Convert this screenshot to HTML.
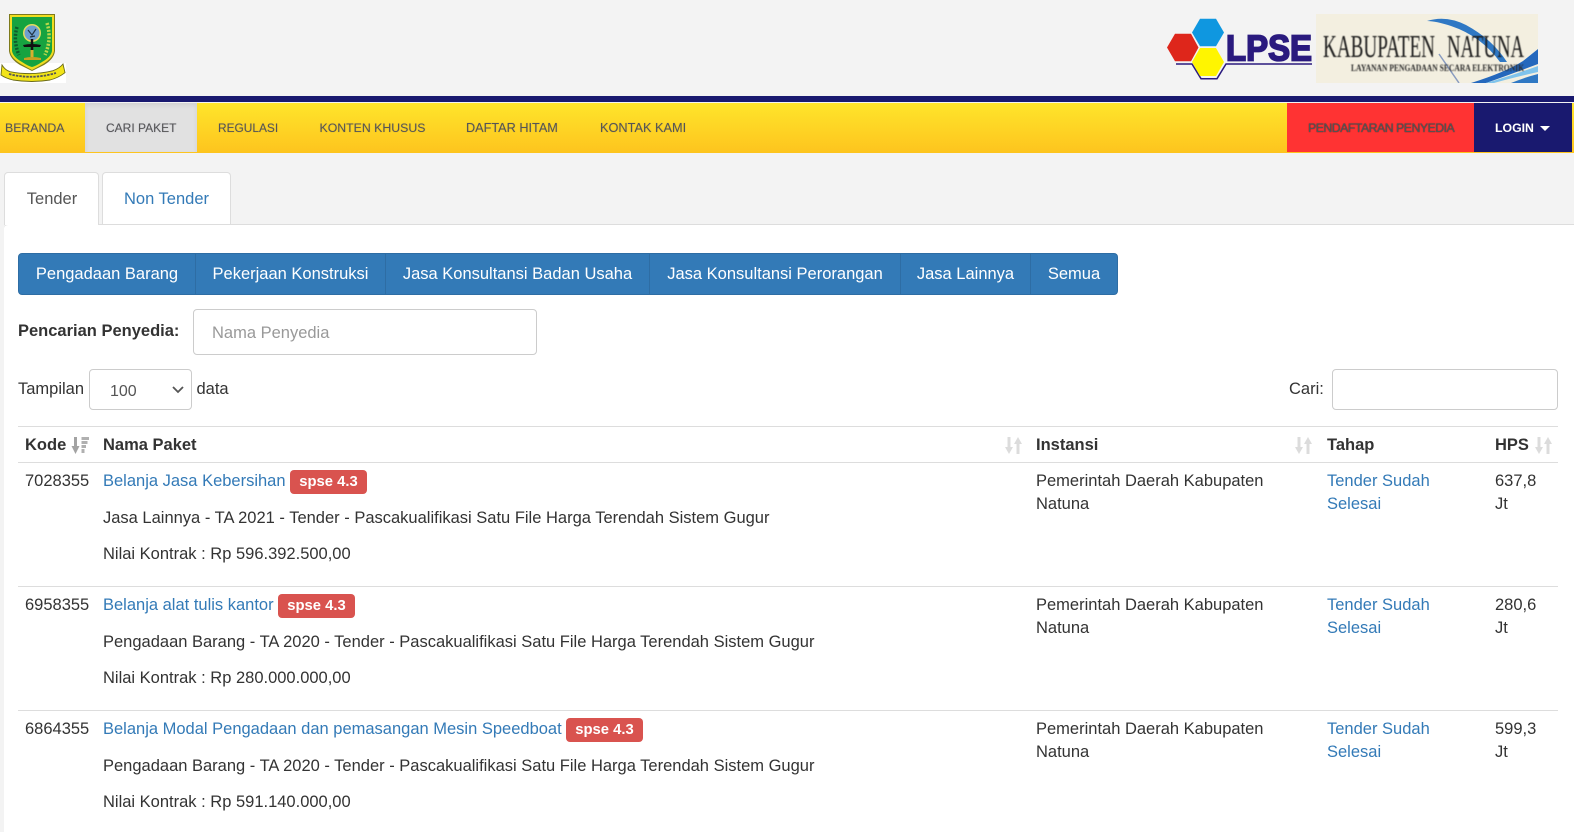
<!DOCTYPE html>
<html><head><meta charset="utf-8"><title>LPSE Kabupaten Natuna</title>
<style>
html,body{margin:0;padding:0;width:1574px;height:832px;overflow:hidden;background:#f3f3f3}
body{position:relative;font-family:"Liberation Sans",sans-serif;font-size:16.5px;color:#333}
.a{position:absolute;white-space:nowrap;line-height:23px;margin-top:1px}
a,.l{color:#337ab7;text-decoration:none}
.n{position:absolute;top:103px;height:50px;line-height:50px;font-size:12.3px;color:#555;white-space:nowrap;text-shadow:0 0 1px rgba(60,60,110,.35)}
.b{position:absolute;top:253px;height:42px;line-height:40px;color:#fff;background:#337ab7;border:1px solid #2e6da4;border-left:0;box-sizing:border-box;text-align:center;white-space:nowrap}
.bd{position:absolute;background:#ddd;height:1px;left:18px;width:1540px}
.lab{position:absolute;background:#d9534f;color:#fff;font-weight:bold;font-size:14.8px;height:24px;line-height:24px;border-radius:4px;text-align:center;white-space:nowrap}
.th{font-weight:bold}
</style></head><body>

<svg style="position:absolute;left:0;top:13px" width="67" height="71" viewBox="0 0 67 71">
<rect x="0" y="50" width="66" height="20" fill="#fff"/>
<path d="M9 1H55V38Q54 46 44 52Q36 56 32 58Q28 56 20 52Q10 46 9 38Z" fill="#7d7a1c"/>
<path d="M10 2H54V38Q53 45 43 51Q36 55 32 57Q28 55 21 51Q11 45 10 38Z" fill="#f0dd20"/>
<path d="M12 4H52V38Q51 44 42 49Q36 53 32 54Q28 53 22 49Q13 44 12 38Z" fill="#16a340"/>
<circle cx="32" cy="20" r="9" fill="#e6dc60"/>
<circle cx="32" cy="20" r="7.500" fill="#6f9fd0"/>
<path d="M28 17L32 22L36 16M30 24L35 23" stroke="#234" stroke-width="1.200" fill="none"/>
<path d="M23 32Q32 30 41 32L40 34H24Z" fill="#111"/>
<path d="M32 26V37" stroke="#111" stroke-width="2.500"/>
<path d="M32 37V44" stroke="#d8b030" stroke-width="3"/>
<path d="M24 45Q32 43 41 45V47H24Z" fill="#c8a020"/>
<path d="M17 14Q13 28 19 42" stroke="#0d5c2a" stroke-width="3.500" stroke-dasharray="2 1.500" fill="none"/>
<path d="M47 10Q52 26 45 42" stroke="#bcd84a" stroke-width="3.500" stroke-dasharray="2 1.500" fill="none"/>
<path d="M2 52Q5 57 10 58.700Q32 63 53 57.700Q60 55 63 51L65 59.700Q58 65 50 67Q32 70 13 67Q5 65 1 62Z" fill="#f2e418" stroke="#6a6a18" stroke-width=".9"/>
<path d="M9 61Q32 67 56 60" stroke="#555" stroke-width="1.800" stroke-dasharray="2.500 1" fill="none"/>
</svg>

<svg style="position:absolute;left:1165px;top:17px" width="150" height="64" viewBox="1165 17 150 64">
<path d="M1176 64H1192L1201 78.700H1217L1226 64H1312" fill="none" stroke="#2a1a7e" stroke-width="1.500"/>
<polygon points="1167,47.500 1175,33.700 1191,33.700 1198.500,47.500 1191,61.300 1175,61.300" fill="#de261b"/>
<polygon points="1192,32.500 1200,18.700 1216,18.700 1224,32.500 1216,46.300 1200,46.300" fill="#0f97e0"/>
<polygon points="1192,62 1200,48 1216,48 1224,62 1216,76 1200,76" fill="#fff500"/>
<text x="1226" y="60.300" font-family="Liberation Sans" font-weight="bold" font-size="36" fill="#2a1a7e" stroke="#2a1a7e" stroke-width="1.800" textLength="86" lengthAdjust="spacingAndGlyphs">LPSE</text>
</svg>

<svg style="position:absolute;left:1316px;top:14px" width="222" height="69" viewBox="0 0 222 69">
<defs><filter id="bl" x="-5%" y="-20%" width="110%" height="140%"><feGaussianBlur stdDeviation=".45"/></filter></defs>
<rect width="222" height="69" fill="#f3efe0"/>
<path d="M111 7Q130 1 150 11Q176 25 191 48L184 48Q165 22 135 12Q120 7 111 7Z" fill="#2f78c4"/>
<path d="M123 40L143 69" stroke="#8a9cc0" stroke-width="1.500"/>
<path d="M222 35V50Q190 62 170 69H155Q190 58 207 47Z" fill="#2468bd"/>
<path d="M222 52V58Q195 64 178 69H170Q200 60 222 52Z" fill="#7fc3ec"/>
<path d="M222 60V69H195Q210 63 222 60Z" fill="#2f78c4"/>
<g filter="url(#bl)">
<text x="7" y="43" font-family="Liberation Serif" font-size="32" fill="#1e1e1e" textLength="112" lengthAdjust="spacingAndGlyphs">KABUPATEN</text>
<text x="131" y="43" font-family="Liberation Serif" font-size="32" fill="#1e1e1e" textLength="77" lengthAdjust="spacingAndGlyphs">NATUNA</text>
<text x="35" y="57" font-family="Liberation Serif" font-weight="bold" font-size="9" fill="#2a2a2a" textLength="173" lengthAdjust="spacingAndGlyphs">LAYANAN PENGADAAN SECARA ELEKTRONIK</text>
</g>
</svg>

<div style="position:absolute;left:0;top:96px;width:1574px;height:6px;background:#19196f"></div>
<div style="position:absolute;left:0;top:103px;width:1574px;height:50px;background:linear-gradient(#ffe52b,#fdc41e)"></div>
<div style="position:absolute;left:85px;top:103px;width:112px;height:49px;background:#e1e1e1;box-shadow:inset 0 2px 5px rgba(0,0,0,.08)"></div>
<div style="position:absolute;left:1287px;top:103px;width:187px;height:49px;background:#ff3333"></div>
<div style="position:absolute;left:1474px;top:103px;width:98px;height:49px;background:#19196f"></div>

<div class="n" style="left:5px">BERANDA</div>
<div class="n" style="left:106px;font-size:12px">CARI PAKET</div>
<div class="n" style="left:218px;font-size:11.900px">REGULASI</div>
<div class="n" style="left:319.500px">KONTEN KHUSUS</div>
<div class="n" style="left:466px;font-size:12.700px">DAFTAR HITAM</div>
<div class="n" style="left:600px;font-size:12.750px">KONTAK KAMI</div>
<div class="n" style="left:1308px;letter-spacing:-.5px;text-shadow:0 0 1px #222">PENDAFTARAN PENYEDIA</div>
<div class="n" style="left:1495px;color:#fff;font-weight:bold;font-size:12.3px">LOGIN</div>
<div style="position:absolute;left:1540px;top:126px;border-left:5.500px solid transparent;border-right:5.500px solid transparent;border-top:5px solid #fff"></div>

<div style="position:absolute;left:4px;top:224px;width:1570px;height:608px;background:#fff;border-top:1px solid #ddd;border-radius:4px 0 0 0;box-sizing:border-box"></div>
<div style="position:absolute;left:4px;top:172px;width:95px;height:53px;box-sizing:border-box;background:#fff;border:1px solid #ddd;border-bottom:0;border-radius:4px 4px 0 0;text-align:center;line-height:52px;color:#555;padding-left:1px">Tender</div>
<div style="position:absolute;left:102px;top:172px;width:129px;height:52px;box-sizing:border-box;background:#fff;border:1px solid #ddd;border-bottom:0;border-radius:4px 4px 0 0;text-align:center;line-height:52px;color:#337ab7">Non Tender</div>

<div class="b" style="left:18px;width:178px;border-left:1px solid #2e6da4;border-radius:4px 0 0 4px">Pengadaan Barang</div>
<div class="b" style="left:196px;width:190px">Pekerjaan Konstruksi</div>
<div class="b" style="left:386px;width:264px">Jasa Konsultansi Badan Usaha</div>
<div class="b" style="left:650px;width:251px">Jasa Konsultansi Perorangan</div>
<div class="b" style="left:901px;width:130px">Jasa Lainnya</div>
<div class="b" style="left:1031px;width:87px;border-radius:0 4px 4px 0">Semua</div>

<div class="a" style="left:18px;top:319px;font-weight:bold">Pencarian Penyedia:</div>
<div style="position:absolute;left:193px;top:309px;width:344px;height:46px;box-sizing:border-box;border:1px solid #ccc;border-radius:4px;background:#fff;line-height:46px;padding-left:18px;color:#999">Nama Penyedia</div>

<div class="a" style="left:18px;top:377px">Tampilan</div>
<div style="position:absolute;left:89px;top:369px;width:103px;height:41px;box-sizing:border-box;border:1px solid #ccc;border-radius:4px;background:#fff;line-height:43px;padding-left:20px;color:#555;font-size:16px">100</div>
<svg style="position:absolute;left:171px;top:385px" width="14" height="9" viewBox="0 0 14 9"><path d="M2 2L7 7L12 2" fill="none" stroke="#555" stroke-width="1.800"/></svg>
<div class="a" style="left:196.500px;top:377px">data</div>
<div class="a" style="left:1289px;top:377px">Cari:</div>
<div style="position:absolute;left:1332px;top:369px;width:226px;height:41px;box-sizing:border-box;border:1px solid #ccc;border-radius:4px;background:#fff"></div>

<div class="bd" style="top:426px"></div>
<div class="bd" style="top:462px"></div>
<div class="bd" style="top:586px"></div>
<div class="bd" style="top:710px"></div>

<div class="a th" style="left:25px;top:433px">Kode</div>
<svg style="position:absolute;left:71px;top:436px" width="20" height="19" viewBox="0 0 20 19"><path d="M3 1H6V10H8.500L4.500 18L0.500 10H3Z" fill="#a3a3a3"/><rect x="10.500" y="1" width="7.500" height="3" fill="#b0b0b0"/><rect x="10.500" y="5" width="6" height="3" fill="#b0b0b0"/><rect x="10.500" y="9" width="4.500" height="3" fill="#b0b0b0"/><rect x="10.500" y="13" width="3" height="4" fill="#b0b0b0"/></svg>
<div class="a th" style="left:103px;top:433px">Nama Paket</div>
<div class="a th" style="left:1036px;top:433px">Instansi</div>
<div class="a th" style="left:1327px;top:433px">Tahap</div>
<div class="a th" style="left:1495px;top:433px">HPS</div>
<svg style="position:absolute;left:1004px;top:436px" width="20" height="19" viewBox="0 0 20 19"><path d="M3.500 1H6.500V11H9L5 18L1 11H3.500Z M12.500 18H15.500V8H18L14 1L10 8H12.500Z" fill="#dcdcdc"/></svg>
<svg style="position:absolute;left:1294px;top:436px" width="20" height="19" viewBox="0 0 20 19"><path d="M3.500 1H6.500V11H9L5 18L1 11H3.500Z M12.500 18H15.500V8H18L14 1L10 8H12.500Z" fill="#dcdcdc"/></svg>
<svg style="position:absolute;left:1534px;top:436px" width="20" height="19" viewBox="0 0 20 19"><path d="M3.500 1H6.500V11H9L5 18L1 11H3.500Z M12.500 18H15.500V8H18L14 1L10 8H12.500Z" fill="#dcdcdc"/></svg>

<!-- row 1 -->
<div class="a" style="left:25px;top:469px">7028355</div>
<div class="a l" style="left:103px;top:469px">Belanja Jasa Kebersihan</div>
<div class="lab" style="left:290px;top:470px;width:77px">spse 4.3</div>
<div class="a" style="left:103px;top:506px">Jasa Lainnya - TA 2021 - Tender - Pascakualifikasi Satu File Harga Terendah Sistem Gugur</div>
<div class="a" style="left:103px;top:542px">Nilai Kontrak : Rp 596.392.500,00</div>
<div class="a" style="left:1036px;top:469px">Pemerintah Daerah Kabupaten</div>
<div class="a" style="left:1036px;top:492px">Natuna</div>
<div class="a l" style="left:1327px;top:469px">Tender Sudah</div>
<div class="a l" style="left:1327px;top:492px">Selesai</div>
<div class="a" style="left:1495px;top:469px">637,8</div>
<div class="a" style="left:1495px;top:492px">Jt</div>

<!-- row 2 -->
<div class="a" style="left:25px;top:593px">6958355</div>
<div class="a l" style="left:103px;top:593px">Belanja alat tulis kantor</div>
<div class="lab" style="left:278px;top:594px;width:77px">spse 4.3</div>
<div class="a" style="left:103px;top:630px">Pengadaan Barang - TA 2020 - Tender - Pascakualifikasi Satu File Harga Terendah Sistem Gugur</div>
<div class="a" style="left:103px;top:666px">Nilai Kontrak : Rp 280.000.000,00</div>
<div class="a" style="left:1036px;top:593px">Pemerintah Daerah Kabupaten</div>
<div class="a" style="left:1036px;top:616px">Natuna</div>
<div class="a l" style="left:1327px;top:593px">Tender Sudah</div>
<div class="a l" style="left:1327px;top:616px">Selesai</div>
<div class="a" style="left:1495px;top:593px">280,6</div>
<div class="a" style="left:1495px;top:616px">Jt</div>

<!-- row 3 -->
<div class="a" style="left:25px;top:717px">6864355</div>
<div class="a l" style="left:103px;top:717px">Belanja Modal Pengadaan dan pemasangan Mesin Speedboat</div>
<div class="lab" style="left:566px;top:718px;width:77px">spse 4.3</div>
<div class="a" style="left:103px;top:754px">Pengadaan Barang - TA 2020 - Tender - Pascakualifikasi Satu File Harga Terendah Sistem Gugur</div>
<div class="a" style="left:103px;top:790px">Nilai Kontrak : Rp 591.140.000,00</div>
<div class="a" style="left:1036px;top:717px">Pemerintah Daerah Kabupaten</div>
<div class="a" style="left:1036px;top:740px">Natuna</div>
<div class="a l" style="left:1327px;top:717px">Tender Sudah</div>
<div class="a l" style="left:1327px;top:740px">Selesai</div>
<div class="a" style="left:1495px;top:717px">599,3</div>
<div class="a" style="left:1495px;top:740px">Jt</div>
</body></html>
